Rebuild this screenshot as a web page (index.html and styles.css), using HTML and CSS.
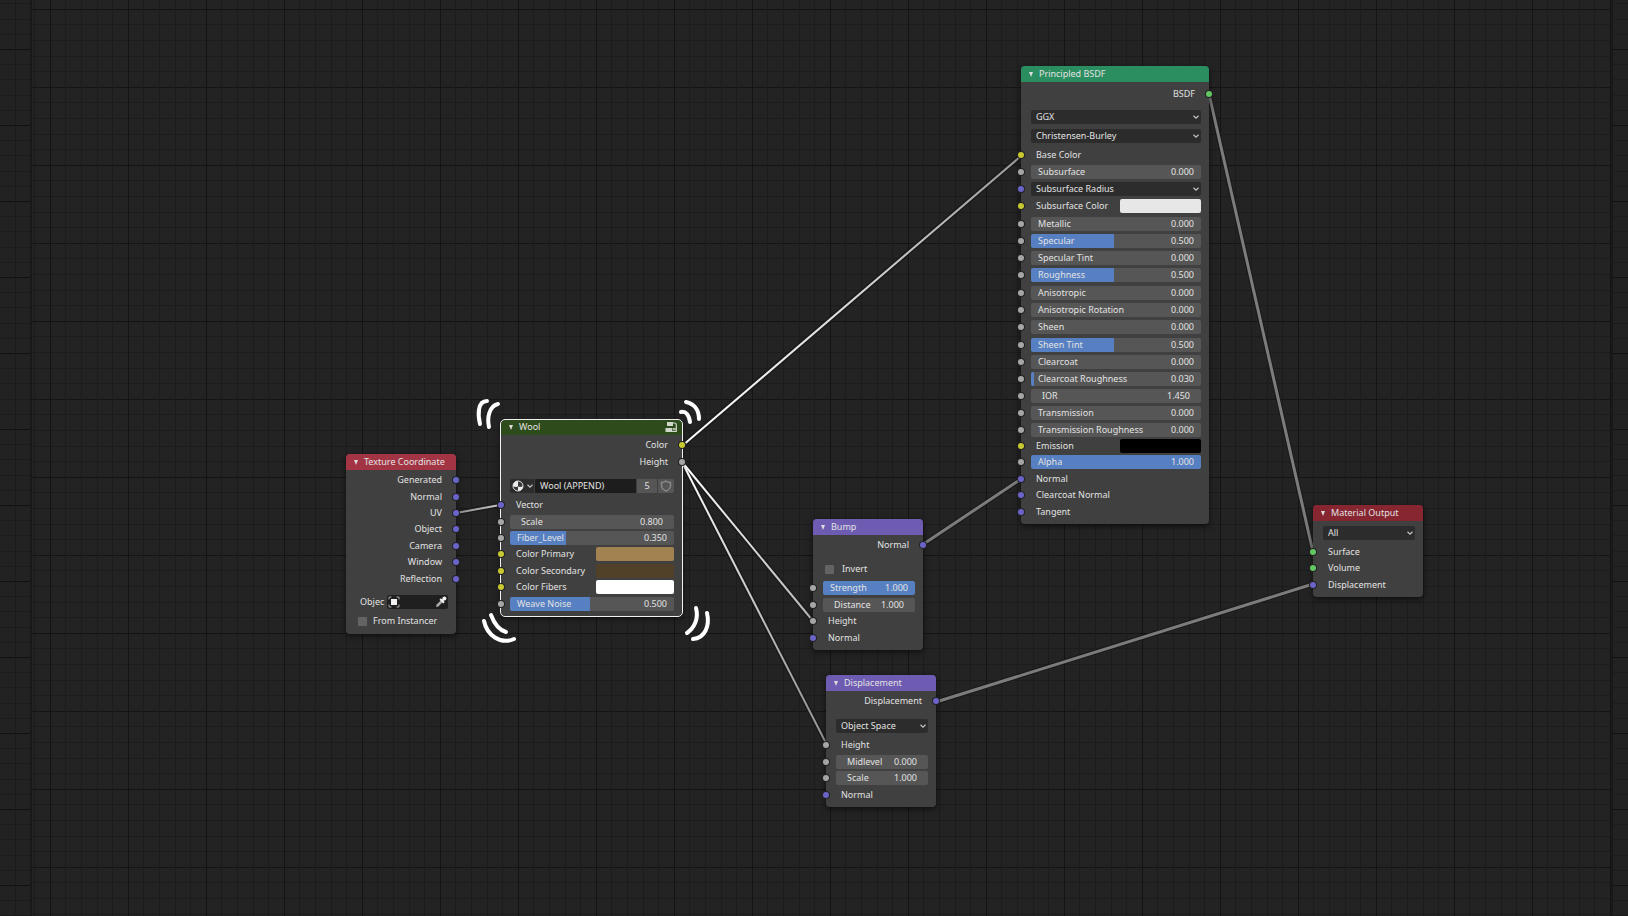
FILE: index.html
```html
<!DOCTYPE html>
<html lang="en">
<head>
    <meta charset="UTF-8">
    <meta name="viewport" content="width=device-width, initial-scale=1.0">
    <title>Shader Editor</title>
    <link rel="stylesheet" href="styles.css">
</head>
<body>
    <!-- Shared icons -->
    <svg class="defs" aria-hidden="true">
        <symbol id="chevron" viewBox="0 0 8 8"><path d="M1.5 2.8 L4 5.2 L6.5 2.8" fill="none" stroke="#c4c4c4" stroke-width="1.2"/></symbol>
        <symbol id="arrow" viewBox="0 0 8 8"><path d="M2 2 H6 L4 7 Z" fill="#dcdcdc"/></symbol>
    </svg>

    <main class="canvas">
        <div class="strip left"></div>
        <div class="strip right"></div>

        <!-- Links between nodes -->
        <svg class="wires" aria-hidden="true">
            <defs>
                <linearGradient id="fade-up" gradientUnits="userSpaceOnUse" x1="682" y1="446" x2="1021" y2="156">
                    <stop offset="0" stop-color="#fff"/><stop offset="0.45" stop-color="#e0e0e0"/><stop offset="1" stop-color="#999"/>
                </linearGradient>
                <linearGradient id="fade-down" gradientUnits="userSpaceOnUse" x1="682" y1="462" x2="820" y2="700">
                    <stop offset="0" stop-color="#fff"/><stop offset="1" stop-color="#999"/>
                </linearGradient>
                <linearGradient id="fade-left" gradientUnits="userSpaceOnUse" x1="456" y1="513" x2="500" y2="505">
                    <stop offset="0" stop-color="#8c8c8c"/><stop offset="1" stop-color="#c8c8c8"/>
                </linearGradient>
            </defs>
            <g class="wire-shadow">
                <path d="M456 513 L500 505"/>
                <path d="M682 446 L1021 156"/>
                <path d="M682 462 L813 621"/>
                <path d="M682 462 L827 745"/>
                <path d="M922 545 L1021 479"/>
                <path d="M936 702 L1313 584"/>
                <path d="M1209 94 L1313 552"/>
            </g>
            <g class="wire">
                <path d="M922 545 L1021 479"/>
                <path d="M936 702 L1313 584"/>
                <path d="M1209 94 L1313 552"/>
            </g>
            <g class="wire active">
                <path d="M456 513 L500 505" stroke="url(#fade-left)"/>
                <path d="M682 446 L1021 156" stroke="url(#fade-up)"/>
                <path d="M682 462 L813 621" stroke="url(#fade-down)"/>
                <path d="M682 462 L827 745" stroke="url(#fade-down)"/>
            </g>
        </svg>

        <!-- Texture Coordinate -->
        <section class="node texcoord">
            <header><button class="toggle" aria-label="Collapse"><svg><use href="#arrow"/></svg></button><h2>Texture Coordinate</h2></header>
            <div class="rows r7">
                <div class="row out">Generated<i class="socket vector"></i></div>
                <div class="row out">Normal<i class="socket vector"></i></div>
                <div class="row out">UV<i class="socket vector"></i></div>
                <div class="row out">Object<i class="socket vector"></i></div>
                <div class="row out">Camera<i class="socket vector"></i></div>
                <div class="row out">Window<i class="socket vector"></i></div>
                <div class="row out">Reflection<i class="socket vector"></i></div>
            </div>
            <div class="object-row">
                <span>Objec</span>
                <div class="picker">
                    <button aria-label="Choose object">
                        <svg viewBox="0 0 12 12"><path d="M1 3.5 V1 H3.5 M8.5 1 H11 V3.5 M11 8.5 V11 H8.5 M3.5 11 H1 V8.5" fill="none" stroke="#a5a5a5"/><rect x="3" y="3" width="6" height="6" fill="#f2f2f2"/></svg>
                    </button>
                    <button aria-label="Eyedropper">
                        <svg viewBox="0 0 12 12"><path d="M1 11 L1.6 8.6 L6 4.2 L7.8 6 L3.4 10.4 Z" fill="#aaa"/><path d="M5.2 3 L9 6.8 M7 5 L9.6 2.4" fill="none" stroke="#f0f0f0" stroke-width="2"/><circle cx="9.4" cy="2.6" r="2" fill="#f0f0f0"/></svg>
                    </button>
                </div>
            </div>
            <label class="check"><input type="checkbox">From Instancer</label>
        </section>

        <!-- Wool group -->
        <section class="node wool">
            <header>
                <button class="toggle" aria-label="Collapse"><svg><use href="#arrow"/></svg></button><h2>Wool</h2>
                <button class="group-icon" aria-label="Edit group">
                    <svg viewBox="0 0 12 12"><path d="M2 1 H8 V5 H2 Z M0.5 7 H7 V11 H0.5 Z" fill="#cfd8c8"/><path d="M8 2 H9.5 Q11.3 2 11.3 4 V10.4 H7" fill="none" stroke="#cfd8c8" stroke-width="1.2"/><path d="M7.5 8 H11" stroke="#a9b89f" stroke-width="2"/></svg>
                </button>
            </header>
            <div class="rows r2">
                <div class="row out">Color<i class="socket color"></i></div>
                <div class="row out">Height<i class="socket value"></i></div>
            </div>
            <div class="id-row">
                <button class="id-type" aria-label="Browse node groups">
                    <svg class="ball" viewBox="0 0 12 12"><circle cx="6" cy="6" r="5" fill="#383838" stroke="#ddd"/><path d="M6 1 A5 5 0 0 0 1 6 Q3.5 7.5 6 6.5 Z M6 6.5 Q8.5 7.5 11 6 A5 5 0 0 1 6 11 Z" fill="#eee"/></svg>
                    <svg><use href="#chevron"/></svg>
                </button>
                <input class="id-name" aria-label="Group name" value="Wool (APPEND)">
                <button class="id-users">5</button>
                <button class="id-fake" aria-label="Fake user">
                    <svg viewBox="0 0 12 12"><path d="M1.5 2.5 Q4 2.5 6 1 Q8 2.5 10.5 2.5 V6 Q10 9.5 6 11 Q2 9.5 1.5 6 Z" fill="none" stroke="#8c8c8c" stroke-width="1.4"/></svg>
                </button>
            </div>
            <div class="rows r7">
                <div class="row">Vector<i class="socket vector"></i></div>
                <div class="row"><i class="socket value"></i><label class="field plain">Scale<input value="0.800"></label></div>
                <div class="row"><i class="socket value"></i><label class="field" style="--fill: 34%">Fiber_Level<input value="0.350"></label></div>
                <div class="row"><i class="socket color"></i><label for="c-primary">Color Primary</label><input type="color" id="c-primary" value="#a38251"></div>
                <div class="row"><i class="socket color"></i><label for="c-secondary">Color Secondary</label><input type="color" id="c-secondary" value="#524129"></div>
                <div class="row"><i class="socket color"></i><label for="c-fibers">Color Fibers</label><input type="color" id="c-fibers" value="#ffffff"></div>
                <div class="row"><i class="socket value"></i><label class="field" style="--fill: 49%">Weave Noise<input value="0.500"></label></div>
            </div>
        </section>

        <!-- Bump -->
        <section class="node bump">
            <header><button class="toggle" aria-label="Collapse"><svg><use href="#arrow"/></svg></button><h2>Bump</h2></header>
            <div class="rows r1">
                <div class="row out">Normal<i class="socket vector"></i></div>
            </div>
            <label class="check"><input type="checkbox">Invert</label>
            <div class="rows r4">
                <div class="row"><i class="socket value"></i><label class="field" style="--fill: 100%">Strength<input value="1.000"></label></div>
                <div class="row"><i class="socket value"></i><label class="field plain">Distance<input value="1.000"></label></div>
                <div class="row">Height<i class="socket value"></i></div>
                <div class="row">Normal<i class="socket vector"></i></div>
            </div>
        </section>

        <!-- Displacement -->
        <section class="node displacement">
            <header><button class="toggle" aria-label="Collapse"><svg><use href="#arrow"/></svg></button><h2>Displacement</h2></header>
            <div class="rows r1">
                <div class="row out">Displacement<i class="socket vector"></i></div>
            </div>
            <div class="select"><select aria-label="Space"><option>Object Space</option><option>World Space</option></select><svg><use href="#chevron"/></svg></div>
            <div class="rows r4">
                <div class="row">Height<i class="socket value"></i></div>
                <div class="row"><i class="socket value"></i><label class="field plain">Midlevel<input value="0.000"></label></div>
                <div class="row"><i class="socket value"></i><label class="field plain">Scale<input value="1.000"></label></div>
                <div class="row">Normal<i class="socket vector"></i></div>
            </div>
        </section>

        <!-- Principled BSDF -->
        <section class="node principled">
            <header><button class="toggle" aria-label="Collapse"><svg><use href="#arrow"/></svg></button><h2>Principled BSDF</h2></header>
            <div class="rows r1">
                <div class="row out">BSDF<i class="socket shader"></i></div>
            </div>
            <div class="select"><select aria-label="Distribution"><option>GGX</option></select><svg><use href="#chevron"/></svg></div>
            <div class="select"><select aria-label="Subsurface method"><option>Christensen-Burley</option></select><svg><use href="#chevron"/></svg></div>
            <div class="rows r15">
                <div class="row">Base Color<i class="socket color"></i></div>
                <div class="row"><i class="socket value"></i><label class="field">Subsurface<input value="0.000"></label></div>
                <div class="row"><i class="socket vector"></i><div class="select"><select aria-label="Subsurface Radius"><option>Subsurface Radius</option></select><svg><use href="#chevron"/></svg></div></div>
                <div class="row"><i class="socket color"></i><label for="c-subsurface">Subsurface Color</label><input type="color" id="c-subsurface" value="#e7e7e7"></div>
                <div class="row"><i class="socket value"></i><label class="field">Metallic<input value="0.000"></label></div>
                <div class="row"><i class="socket value"></i><label class="field" style="--fill: 49%">Specular<input value="0.500"></label></div>
                <div class="row"><i class="socket value"></i><label class="field">Specular Tint<input value="0.000"></label></div>
                <div class="row"><i class="socket value"></i><label class="field" style="--fill: 49%">Roughness<input value="0.500"></label></div>
                <div class="row"><i class="socket value"></i><label class="field">Anisotropic<input value="0.000"></label></div>
                <div class="row"><i class="socket value"></i><label class="field">Anisotropic Rotation<input value="0.000"></label></div>
                <div class="row"><i class="socket value"></i><label class="field">Sheen<input value="0.000"></label></div>
                <div class="row"><i class="socket value"></i><label class="field" style="--fill: 49%">Sheen Tint<input value="0.500"></label></div>
                <div class="row"><i class="socket value"></i><label class="field">Clearcoat<input value="0.000"></label></div>
                <div class="row"><i class="socket value"></i><label class="field" style="--fill: 2%">Clearcoat Roughness<input value="0.030"></label></div>
                <div class="row"><i class="socket value"></i><label class="field plain">IOR<input value="1.450"></label></div>
            </div>
            <div class="rows r7">
                <div class="row"><i class="socket value"></i><label class="field">Transmission<input value="0.000"></label></div>
                <div class="row"><i class="socket value"></i><label class="field">Transmission Roughness<input value="0.000"></label></div>
                <div class="row"><i class="socket color"></i><label for="c-emission">Emission</label><input type="color" id="c-emission" value="#000000"></div>
                <div class="row"><i class="socket value"></i><label class="field" style="--fill: 100%">Alpha<input value="1.000"></label></div>
                <div class="row">Normal<i class="socket vector"></i></div>
                <div class="row">Clearcoat Normal<i class="socket vector"></i></div>
                <div class="row">Tangent<i class="socket vector"></i></div>
            </div>
        </section>

        <!-- Material Output -->
        <section class="node output">
            <header><button class="toggle" aria-label="Collapse"><svg><use href="#arrow"/></svg></button><h2>Material Output</h2></header>
            <div class="select"><select aria-label="Target"><option>All</option><option>Cycles</option><option>Eevee</option></select><svg><use href="#chevron"/></svg></div>
            <div class="rows r3">
                <div class="row">Surface<i class="socket shader"></i></div>
                <div class="row">Volume<i class="socket shader"></i></div>
                <div class="row">Displacement<i class="socket vector"></i></div>
            </div>
        </section>

        <!-- Hand-drawn marks round the Wool node -->
        <svg class="marks" aria-hidden="true">
            <path d="M487 401 C477 401 478 416 480 424"/>
            <path d="M498 404 C489 406 487 418 489 427"/>
            <path d="M686 402 C695 404 699 411 699 419"/>
            <path d="M681 412 C686 411 689 415 690 422"/>
            <path d="M484 621 C487 635 500 645 514 639"/>
            <path d="M491 615 C494 623 499 630 506 632"/>
            <path d="M696 608 C699 619 694 628 687 633"/>
            <path d="M707 613 C710 626 705 638 693 639"/>
        </svg>
    </main>
</body>
</html>
```
FILE: styles.css
```css
* {
    box-sizing: border-box;
}

body {
    margin: 0;
    background: #232323;
    color: #e2e2e2;
    font-family: 'Noto Sans', sans-serif;
    font-size: 9px;
    line-height: 14px;
}

button, input, select {
    margin: 0;
    padding: 0;
    border: none;
    background: none;
    color: inherit;
    font: inherit;
}

svg {
    display: block;
}

.defs {
    position: absolute;
    width: 0;
    height: 0;
}

/* Canvas and grid */
.canvas {
    --minor: #1c1c1c;
    --major: #141414;
    position: relative;
    min-height: 100vh;
    overflow: hidden;
    background-color: #232323;
    background-image:
        linear-gradient(90deg, var(--major) 1px, transparent 1px 15px, var(--minor) 15px 16px, transparent 16px 31px, var(--minor) 31px 32px, transparent 32px 47px, var(--minor) 47px 48px, transparent 48px 62px, var(--minor) 62px 63px, transparent 63px),
        linear-gradient(var(--major) 1px, transparent 1px 15px, var(--minor) 15px 16px, transparent 16px 31px, var(--minor) 31px 32px, transparent 32px 47px, var(--minor) 47px 48px, transparent 48px 62px, var(--minor) 62px 63px, transparent 63px);
    background-size: 78px 78px;
    background-position: 50px 9px;
}

.strip {
    position: absolute;
    top: 0;
    bottom: 0;
    background-color: #222;
    background-image:
        linear-gradient(90deg, transparent 15px, #1b1b1b 15px 16px, transparent 16px),
        linear-gradient(#111 1px, transparent 1px 15px, var(--minor) 15px 16px, transparent 16px 30px, var(--minor) 30px 31px, transparent 31px 46px, var(--minor) 46px 47px, transparent 47px 61px, var(--minor) 61px 62px, transparent 62px);
    background-size: 100% 76px;
    background-position: 0 49px;
}

.strip.left {
    left: 0;
    width: 32px;
    border-right: 2px solid #191919;
}

.strip.right {
    right: 0;
    width: 17px;
    border-left: 2px solid #191919;
}

.wires, .marks {
    position: absolute;
    inset: 0;
    width: 100%;
    height: 100%;
    fill: none;
    pointer-events: none;
}

.wire {
    stroke: #7c7c7c;
    stroke-width: 3;
}

.wire.active {
    stroke-width: 2;
}

.wire-shadow {
    stroke: #1a1a1a;
    stroke-width: 5;
}

.marks {
    stroke: #fff;
    stroke-width: 4;
    stroke-linecap: round;
}

/* Nodes */
.node {
    position: absolute;
    display: flex;
    flex-direction: column;
    width: 110px;
    padding-bottom: 4px;
    border-radius: 4px;
    background: #404040;
    box-shadow: 0 2px 6px rgba(0, 0, 0, 0.6);
}

.node header {
    display: flex;
    align-items: center;
    height: 16px;
    padding: 0 5px 1px 6px;
    border-radius: 4px 4px 0 0;
}

.node h2 {
    flex: 1;
    margin: 0;
    font-size: 9px;
    font-weight: normal;
    white-space: nowrap;
}

.toggle {
    width: 8px;
    margin-right: 4px;
}

.toggle svg {
    width: 8px;
    height: 8px;
}

.texcoord {
    left: 346px;
    top: 454px;
}

.wool {
    left: 501px;
    top: 420px;
    width: 181px;
    outline: 1px solid #f0f0f0;
}

.bump {
    left: 813px;
    top: 519px;
}

.displacement {
    left: 826px;
    top: 675px;
}

.principled {
    left: 1021px;
    top: 66px;
    width: 188px;
}

.output {
    left: 1313px;
    top: 505px;
}

.texcoord header {
    background: #a23444;
}

.wool header {
    background: #2e4c1b;
}

.bump header, .displacement header {
    background: #6e5cb2;
}

.principled header {
    background: #2b8e60;
}

.output header {
    background: #872530;
}

/* Socket rows share the height of their group */
.rows {
    display: grid;
    grid-auto-rows: 1fr;
}

.r1 {
    height: 16px;
    margin-top: 2px;
}

.r2 {
    height: 33px;
}

.r3 {
    height: 49px;
}

.r4 {
    height: 66px;
}

.r7 {
    height: 115px;
}

.r15 {
    height: 259px;
}

.row {
    position: relative;
    display: flex;
    align-items: center;
    padding: 0 8px 0 15px;
    white-space: nowrap;
}

.row.out {
    justify-content: flex-end;
    padding-right: 14px;
}

.row:has(.field), .row:has(.select) {
    padding-left: 10px;
}

.socket {
    position: absolute;
    left: -3px;
    width: 6px;
    height: 6px;
    border-radius: 50%;
    box-shadow: 0 0 0 1px #222;
}

.out .socket {
    left: auto;
    right: -3px;
}

.vector {
    background: #6a64c8;
}

.color {
    background: #c8c832;
}

.value {
    background: #a6a6a6;
}

.shader {
    background: #63c763;
}

/* Controls */
.field {
    --fill: 0%;
    display: flex;
    flex: 1;
    align-items: center;
    justify-content: space-between;
    min-width: 0;
    height: 14px;
    padding: 0 7px;
    border-radius: 2px;
    background: linear-gradient(90deg, #5680c2 var(--fill), #565656 var(--fill));
}

.field.plain {
    padding: 0 11px;
}

.field input {
    width: 32px;
    text-align: right;
}

input[type="color"] {
    width: 81px;
    height: 14px;
    margin-left: auto;
    border-radius: 2px;
    overflow: hidden;
    appearance: none;
}

.wool input[type="color"] {
    width: 78px;
}

input[type="color"]::-webkit-color-swatch-wrapper {
    padding: 0;
}

input[type="color"]::-webkit-color-swatch {
    border: none;
}

.select {
    position: relative;
    flex: 1;
    margin: 0 8px 0 10px;
}

.row .select {
    margin: 0;
}

.select select {
    display: block;
    width: 100%;
    height: 14px;
    padding: 0 5px;
    border-radius: 2px;
    background: #2c2c2c;
    appearance: none;
}

.select svg {
    position: absolute;
    top: 3px;
    right: 1px;
    width: 8px;
    height: 8px;
    pointer-events: none;
}

.check {
    display: flex;
    align-items: center;
    gap: 8px;
    padding-left: 12px;
}

.check input {
    width: 9px;
    height: 9px;
    border-radius: 1px;
    background: #636363;
    appearance: none;
}

/* Per-node spacing */
.texcoord .rows {
    margin-top: 2px;
}

.texcoord .check {
    margin: 5px 0 2px;
    gap: 6px;
}

.object-row {
    display: flex;
    align-items: center;
    gap: 2px;
    margin-top: 8px;
    padding: 0 8px 0 14px;
}

.object-row span {
    width: 25px;
}

.picker {
    display: flex;
    flex: 1;
    justify-content: space-between;
    padding: 1px 1px;
    border-radius: 2px;
    background: #1f1f1f;
}

.picker svg, .group-icon svg {
    width: 12px;
    height: 12px;
}

.wool header {
    height: 15px;
    padding-bottom: 2px;
}

.wool .r2 {
    margin-top: 2px;
}

.wool .r7 {
    margin-top: 4px;
}

.id-row {
    display: flex;
    gap: 1px;
    height: 14px;
    margin: 9px 8px 0 9px;
}

.wool .row:has(.field) {
    padding-left: 9px;
}

.id-type {
    display: flex;
    align-items: center;
    gap: 2px;
    width: 24px;
    padding-left: 2px;
    border-radius: 2px 0 0 2px;
    background: #2c2c2c;
}

.id-type svg {
    width: 8px;
    height: 8px;
}

.id-type .ball, .id-fake svg {
    width: 12px;
    height: 12px;
}

.id-name {
    flex: 1;
    min-width: 0;
    padding: 0 5px;
    background: #1d1d1d;
}

.id-users {
    width: 20px;
    background: #565656;
}

.id-fake {
    width: 16px;
    padding: 1px 2px;
    border-radius: 0 2px 2px 0;
    background: #565656;
}

.bump .check {
    margin: 9px 0 4px;
}

.displacement .select {
    margin-top: 10px;
    margin-bottom: 4px;
}

.principled .r1 {
    margin: 4px 0 8px;
}

.principled > .select {
    margin-bottom: 5px;
}

.principled > .select + .select {
    margin-bottom: 3px;
}

.output .select {
    margin-top: 5px;
    margin-bottom: 4px;
}
```
